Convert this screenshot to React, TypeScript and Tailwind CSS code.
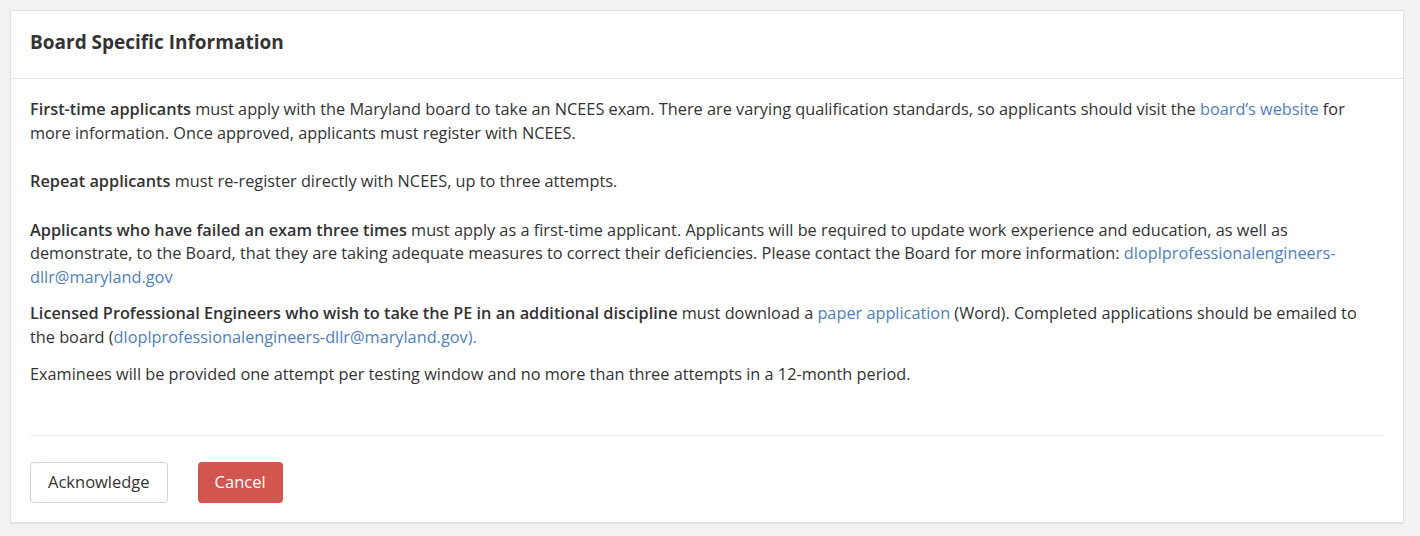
export default function App() {
  const link = 'text-[#4d7fc2]';
  return (
    <div className="min-h-[536px] bg-[#f1f2f3] p-[10px] pr-[16px] font-['Open_Sans',sans-serif] text-[#333]">
      <div className="bg-white border border-[#dfe1e3] shadow-[0_1px_1px_rgba(0,0,0,0.05)]">
        <div className="border-b border-[#e3e5e7] px-[19px] h-[68px] flex items-center">
          <h3 className="text-[19px] font-bold text-[#333] -mt-[4px]">Board Specific Information</h3>
        </div>
        <div className="px-[19px] pt-[19px] text-[16.3px] leading-[23.5px]">
          <p className="mb-[25px]">
            <b className="font-semibold">First-time applicants</b> must apply with the Maryland board to take an NCEES
            exam. There are varying qualification standards, so applicants should visit the{' '}
            <a className={link}>board’s website</a> for more information. Once approved, applicants must register with
            NCEES.
          </p>
          <p className="mb-[25px]">
            <b className="font-semibold">Repeat applicants</b> must re-register directly with NCEES, up to three
            attempts.
          </p>
          <p className="mb-[13px]">
            <b className="font-semibold">Applicants who have failed an exam three times</b> must apply as a first-time
            applicant. Applicants will be required to update work experience and education, as well as demonstrate, to
            the Board, that they are taking adequate measures to correct their deficiencies. Please contact the Board for
            more information: <a className={link}>dloplprofessionalengineers-dllr@maryland.gov</a>
          </p>
          <p className="mb-[14px]">
            <b className="font-semibold">
              Licensed Professional Engineers who wish to take the PE in an additional discipline
            </b>{' '}
            must download a <a className={link}>paper application</a> (Word). Completed applications should be emailed
            to the board (<a className={link}>dloplprofessionalengineers-dllr@maryland.gov).</a>
          </p>
          <p>
            Examinees will be provided one attempt per testing window and no more than three attempts in a 12-month
            period.
          </p>
          <div className="mt-[48px] border-t border-[#ebedef]" />
          <div className="flex gap-[30px] pt-[26px] pb-[19px]">
            <button className="h-[41px] px-[17px] rounded-[4px] border border-[#cfd2d5] bg-white text-[16.5px] text-[#333]">
              Acknowledge
            </button>
            <button className="h-[41px] px-[17px] rounded-[4px] bg-[#d0564f] text-[16.5px] text-white">Cancel</button>
          </div>
        </div>
      </div>
    </div>
  );
}
